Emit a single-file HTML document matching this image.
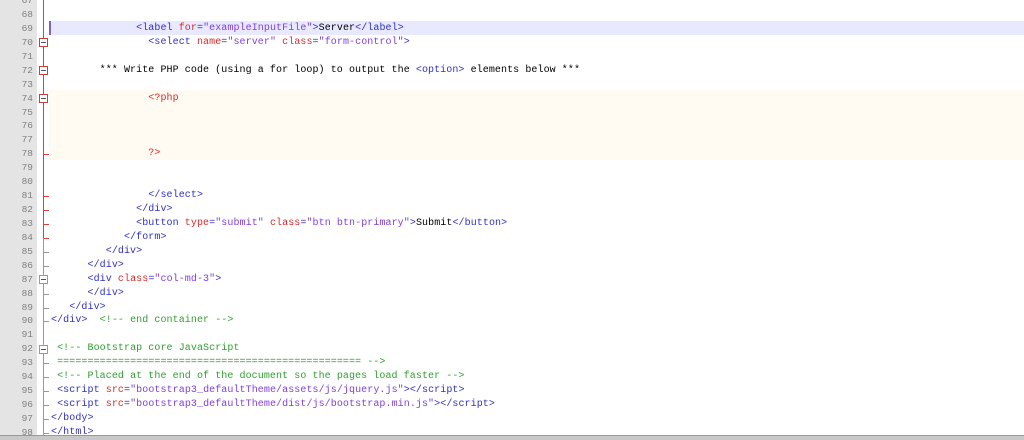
<!DOCTYPE html><html><head><style>
body{margin:0;width:1024px;height:439px;overflow:hidden;background:#fff;position:relative;font-family:"Liberation Mono",monospace;font-size:10px}
.g{position:absolute;left:0;top:0;width:37px;height:435px;background:#e4e4e4}
.m{position:absolute;left:37px;top:0;width:10px;height:435px;background:#fff}
.n{position:absolute;left:0;width:33px;text-align:right;color:#808080;font-size:9.5px;height:14px;line-height:14px}
.l{position:absolute;left:51px;white-space:pre;height:14px;line-height:14px;letter-spacing:.08px;color:#000}
.t{color:#3030c8}.a{color:#e0282a}.s{color:#8040e0}.c{color:#30a030}.p{color:#e0282a}
.vr{position:absolute;left:43px;width:1px;background:#d84040}
.vg{position:absolute;left:43px;width:1px;background:#999}
.h{position:absolute;left:44px;width:5px;height:1px}
.b{position:absolute;left:39px;width:9px;height:9px;border:1px solid #999;background:#fff;box-sizing:border-box}
.b:after{content:"";position:absolute;left:1px;top:3px;width:5px;height:1px;background:#555}
</style></head><body>
<div class="g"></div><div class="m"></div>
<div style="position:absolute;left:49px;top:21px;width:975px;height:14px;background:#e8e8ff"></div>
<div style="position:absolute;left:49px;top:21px;width:2px;height:14px;background:#8060c0"></div>
<div style="position:absolute;left:49px;top:90px;width:975px;height:70px;background:#fffaf2"></div>
<div class="vr" style="top:0;height:238px"></div>
<div class="vg" style="top:238px;height:197px"></div>
<div style="position:absolute;left:0;top:435px;width:1024px;height:4px;background:#c8c8c8;border-top:1px solid #999"></div>
<div id="c"></div>
<script>
(function(){
var L={67:"",68:"",
69:'              <span class="t">&lt;label </span><span class="a">for</span><span class="t">=</span><span class="s">"exampleInputFile"</span><span class="t">&gt;</span>Server<span class="t">&lt;/label&gt;</span>',
70:'                <span class="t">&lt;select </span><span class="a">name</span><span class="t">=</span><span class="s">"server"</span> <span class="a">class</span><span class="t">=</span><span class="s">"form-control"</span><span class="t">&gt;</span>',
71:'',
72:'        *** Write PHP code (using a for loop) to output the <span class="t">&lt;option&gt;</span> elements below ***',
73:'',74:'                <span class="p">&lt;?php</span>',75:'',76:'',77:'',78:'                <span class="p">?&gt;</span>',79:'',80:'',
81:'                <span class="t">&lt;/select&gt;</span>',
82:'              <span class="t">&lt;/div&gt;</span>',
83:'              <span class="t">&lt;button </span><span class="a">type</span><span class="t">=</span><span class="s">"submit"</span> <span class="a">class</span><span class="t">=</span><span class="s">"btn btn-primary"</span><span class="t">&gt;</span>Submit<span class="t">&lt;/button&gt;</span>',
84:'            <span class="t">&lt;/form&gt;</span>',
85:'         <span class="t">&lt;/div&gt;</span>',
86:'      <span class="t">&lt;/div&gt;</span>',
87:'      <span class="t">&lt;div </span><span class="a">class</span><span class="t">=</span><span class="s">"col-md-3"</span><span class="t">&gt;</span>',
88:'      <span class="t">&lt;/div&gt;</span>',
89:'   <span class="t">&lt;/div&gt;</span>',
90:'<span class="t">&lt;/div&gt;</span>  <span class="c">&lt;!-- end container --&gt;</span>',
91:'',
92:' <span class="c">&lt;!-- Bootstrap core JavaScript</span>',
93:' <span class="c">================================================== --&gt;</span>',
94:' <span class="c">&lt;!-- Placed at the end of the document so the pages load faster --&gt;</span>',
95:' <span class="t">&lt;script </span><span class="a">src</span><span class="t">=</span><span class="s">"bootstrap3_defaultTheme/assets/js/jquery.js"</span><span class="t">&gt;&lt;/script&gt;</span>',
96:' <span class="t">&lt;script </span><span class="a">src</span><span class="t">=</span><span class="s">"bootstrap3_defaultTheme/dist/js/bootstrap.min.js"</span><span class="t">&gt;&lt;/script&gt;</span>',
97:'<span class="t">&lt;/body&gt;</span>',98:'<span class="t">&lt;/html&gt;</span>'};
var h='',boxes=[70,72,74,87,92],ticks=[78,81,82,83,84,85,86,88,89,90,93,94,95,96,97,98];
for(var i=67;i<=98;i++){var y=8+(i-68)*13.93;
h+='<div class="n" style="top:'+y+'px">'+i+'</div><div class="l" style="top:'+y+'px">'+L[i]+'</div>';
if(boxes.indexOf(i)>=0)h+='<div class="b" style="top:'+(y+2.5)+'px;'+(i<80?'border-color:#c04040':'')+'"></div>';
if(ticks.indexOf(i)>=0)h+='<div class="h" style="top:'+(y+7)+'px;background:'+(i<=84?'#d84040':'#999')+'"></div>';}
document.getElementById('c').innerHTML=h;
})();
</script>
</body></html>
